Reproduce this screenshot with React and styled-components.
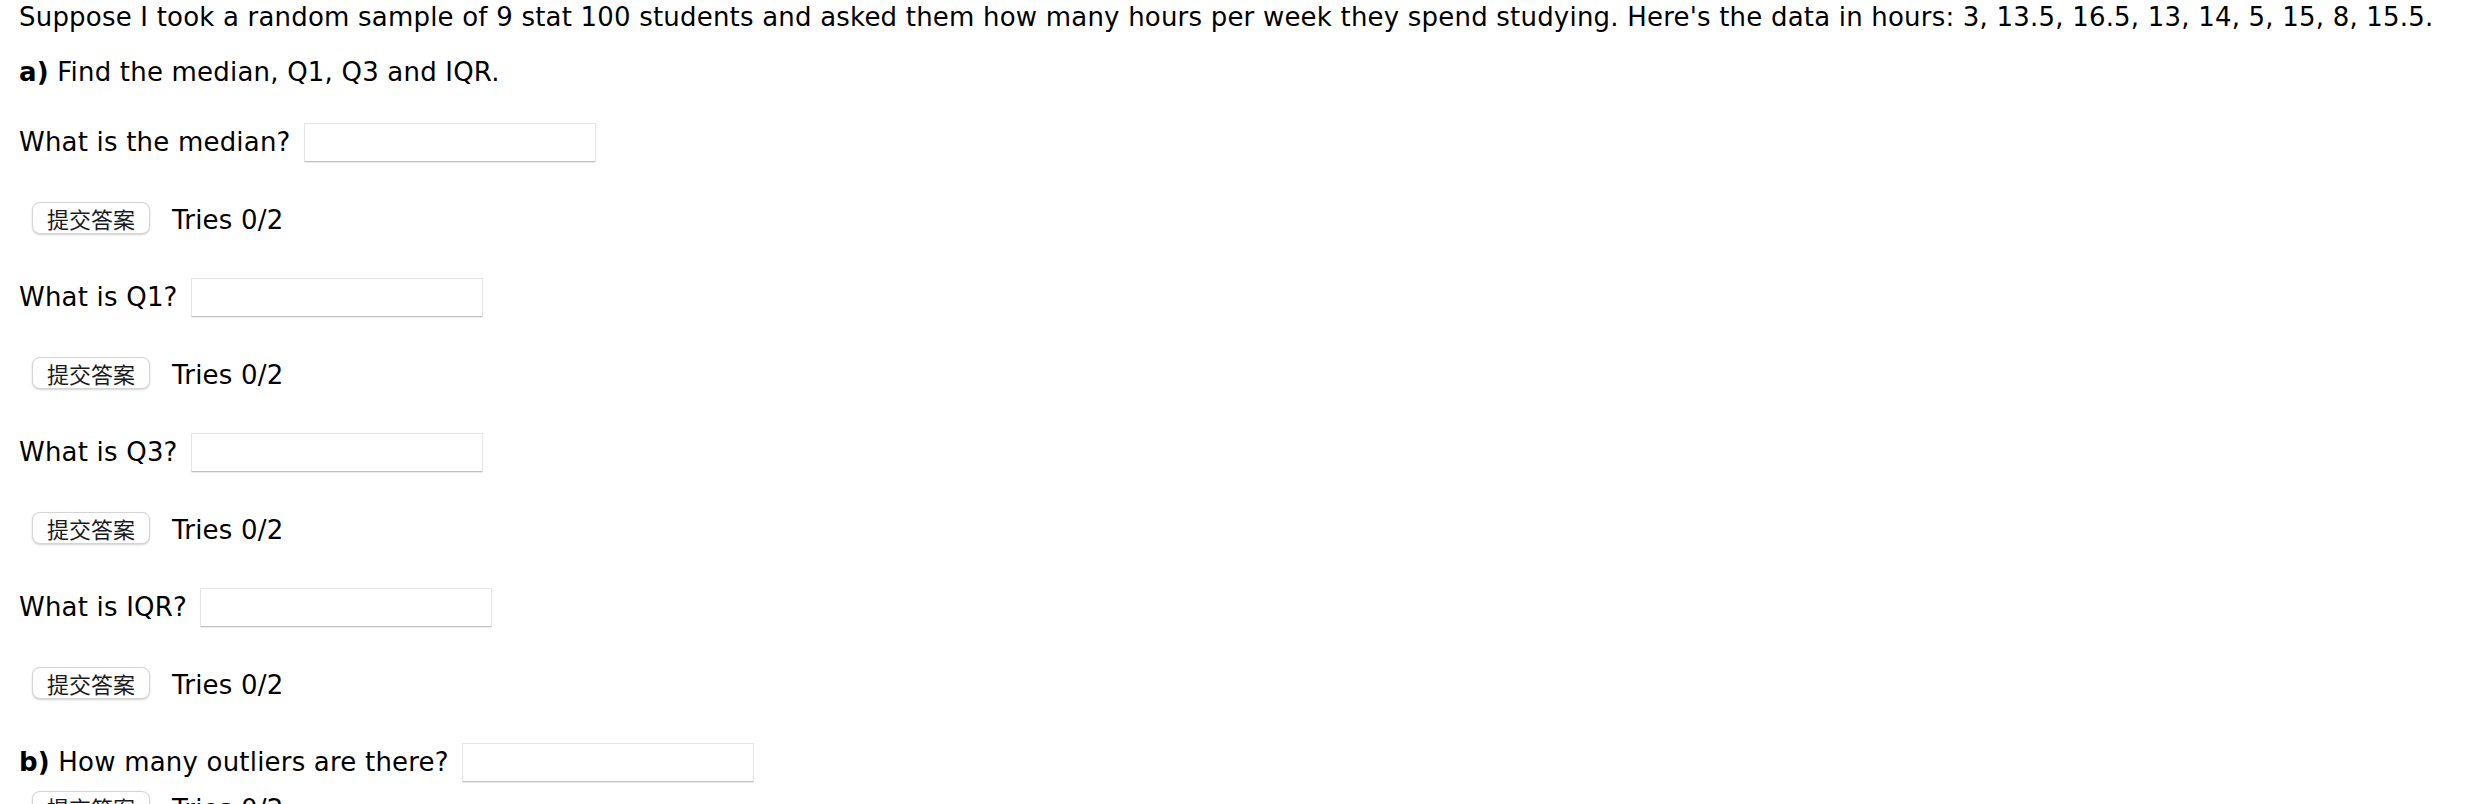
import React from 'react'
import styled, { createGlobalStyle } from 'styled-components'

const GlobalStyle = createGlobalStyle`
    html, body {
        margin: 0;
        padding: 0;
        background: #ffffff;
    }
    body {
        font-family: Verdana, "DejaVu Sans", sans-serif;
        color: #000000;
    }
`

const questions = [
    { id: 'median', label: 'What is the median?' },
    { id: 'q1', label: 'What is Q1?' },
    { id: 'q3', label: 'What is Q3?' },
    { id: 'iqr', label: 'What is IQR?' },
]

function Attempt({ tight }) {
    return (
        <ButtonRow $tight={tight}>
            <SubmitButton type="button">提交答案</SubmitButton>
            <Tries>Tries 0/2</Tries>
        </ButtonRow>
    )
}

function App() {
    return (
        <Page>
            <GlobalStyle />
            <Lead>
                Suppose I took a random sample of 9 stat 100 students and asked them how many hours per week
                they spend studying. Here's the data in hours: 3, 13.5, 16.5, 13, 14, 5, 15, 8, 15.5.
            </Lead>
            <PartHeading>
                <strong>a)</strong> Find the median, Q1, Q3 and IQR.
            </PartHeading>

            {questions.map((q) => (
                <React.Fragment key={q.id}>
                    <QuestionRow>
                        <Label htmlFor={q.id}>{q.label}</Label>
                        <AnswerInput id={q.id} type="text" />
                    </QuestionRow>
                    <Attempt />
                </React.Fragment>
            ))}

            <QuestionRow>
                <Label htmlFor="outliers">
                    <strong>b)</strong> How many outliers are there?
                </Label>
                <AnswerInput id="outliers" type="text" />
            </QuestionRow>
            <Attempt tight />
        </Page>
    )
}

const Page = styled.div`
    padding: 1px 0 0 19px;
    font-size: 26px;
    line-height: 32px;
    letter-spacing: 0.2px;
    white-space: nowrap;

    strong {
        font-weight: bold;
    }
`

const Lead = styled.p`
    margin: 0;
`

const PartHeading = styled.p`
    margin: 23px 0 0;
`

const QuestionRow = styled.div`
    display: flex;
    align-items: center;
    gap: 13px;
    height: 39px;
    margin-top: 35px;

    & + & {
        margin-top: 44px;
    }
`

const Label = styled.label`
    line-height: 39px;
`

const AnswerInput = styled.input`
    box-sizing: border-box;
    width: 292px;
    height: 39px;
    margin: 0;
    padding: 0 8px;
    border: 1px solid #e6e6e6;
    border-bottom-color: #c2c2c2;
    border-radius: 1px;
    box-shadow: 0 1px 1px rgba(0, 0, 0, 0.08);
    background: #ffffff;
    font: inherit;
    outline: none;
`

const ButtonRow = styled.div`
    display: flex;
    align-items: center;
    gap: 22px;
    height: 32px;
    padding-left: 13px;
    margin-top: ${(p) => (p.$tight ? '9px' : '40px')};

    & + ${QuestionRow} {
        margin-top: 44px;
    }
`

const SubmitButton = styled.button`
    box-sizing: border-box;
    width: 118px;
    height: 32px;
    padding: 0;
    border: 1px solid #d4d4d4;
    border-radius: 8px;
    background: #ffffff;
    box-shadow: 0 1px 2px rgba(0, 0, 0, 0.18);
    font-family: "Noto Sans CJK SC", "Noto Sans CJK JP", sans-serif;
    font-size: 22px;
    line-height: 30px;
    letter-spacing: 0;
    color: #1a1a1a;
`

const Tries = styled.span`
    padding-top: 4px;
    line-height: 32px;
`

export default App
